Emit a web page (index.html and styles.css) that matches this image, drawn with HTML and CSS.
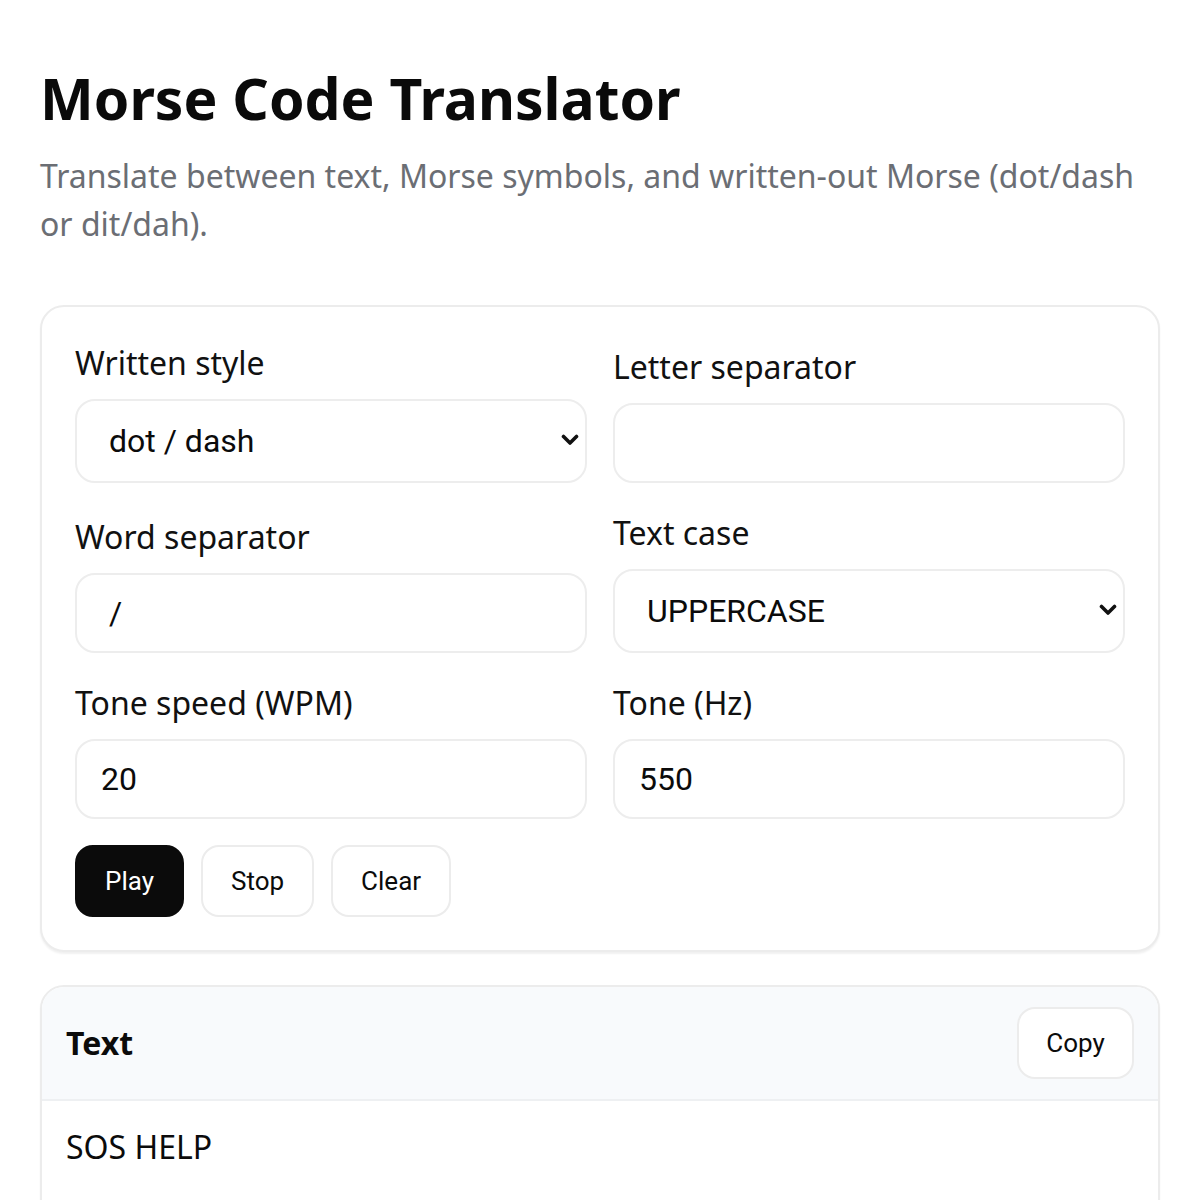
FILE: index.html
```html
<!DOCTYPE html>
<html lang="en">
<head>
<meta charset="utf-8">
<title>Morse Code Translator</title>
<link rel="stylesheet" href="styles.css">
</head>
<body>
<main class="page">
  <h1 class="title">Morse Code Translator</h1>
  <p class="subtitle">Translate between text, Morse symbols, and written-out Morse (dot/dash or dit/dah).</p>

  <section class="card settings">
    <div class="grid">
      <div class="field">
        <label class="label" for="style">Written style</label>
        <div class="select-wrap">
          <select id="style" class="control select">
            <option>dot / dash</option>
            <option>dit / dah</option>
          </select>
          <svg class="chevron" viewBox="0 0 18 12" width="18" height="12" aria-hidden="true"><path d="M2.5 2.5 L9 9 L15.5 2.5" fill="none" stroke="#111" stroke-width="3.6" stroke-linecap="round" stroke-linejoin="round"/></svg>
        </div>
      </div>
      <div class="field">
        <label class="label" for="letter">Letter separator</label>
        <input id="letter" class="control input" type="text" value=" ">
      </div>
      <div class="field">
        <label class="label" for="word">Word separator</label>
        <input id="word" class="control input" type="text" value=" / ">
      </div>
      <div class="field">
        <label class="label" for="case">Text case</label>
        <div class="select-wrap">
          <select id="case" class="control select">
            <option>UPPERCASE</option>
            <option>lowercase</option>
          </select>
          <svg class="chevron" viewBox="0 0 18 12" width="18" height="12" aria-hidden="true"><path d="M2.5 2.5 L9 9 L15.5 2.5" fill="none" stroke="#111" stroke-width="3.6" stroke-linecap="round" stroke-linejoin="round"/></svg>
        </div>
      </div>
      <div class="field">
        <label class="label" for="wpm">Tone speed (WPM)</label>
        <input id="wpm" class="control input num" type="text" value="20">
      </div>
      <div class="field">
        <label class="label" for="hz">Tone (Hz)</label>
        <input id="hz" class="control input num" type="text" value="550">
      </div>
    </div>
    <div class="actions">
      <button class="btn btn-primary" type="button">Play</button>
      <button class="btn" type="button">Stop</button>
      <button class="btn" type="button">Clear</button>
    </div>
  </section>

  <section class="card panel">
    <header class="panel-head">
      <h2 class="panel-title">Text</h2>
      <button class="btn btn-copy" type="button">Copy</button>
    </header>
    <div class="panel-body">SOS HELP</div>
  </section>
</main>
</body>
</html>
```

FILE: styles.css
```css
* { box-sizing: border-box; }

html, body {
  margin: 0;
  padding: 0;
  background: #ffffff;
}

body {
  font-family: "Noto Sans", "Open Sans", "DejaVu Sans", sans-serif;
  color: #0b0b0b;
}

.page {
  padding: 64px 40px 40px;
}

.title {
  margin: 0;
  font-size: 57px;
  line-height: 68px;
  font-weight: 700;
  color: #0a0a0a;
  letter-spacing: 0;
}

.subtitle {
  margin: 20px 0 0;
  font-size: 32px;
  line-height: 48px;
  color: #6b6e74;
}

.card {
  border: 2px solid #ececec;
  border-radius: 24px;
  background: #fff;
  box-shadow: 0 2px 2px rgba(0, 0, 0, 0.06);
}

.settings {
  margin-top: 57px;
  padding: 33px;
}

.grid {
  display: grid;
  grid-template-columns: 1fr 1fr;
  column-gap: 26px;
  row-gap: 27px;
  align-items: end;
}

.field {
  display: flex;
  flex-direction: column;
  gap: 14px;
}

.label {
  font-size: 32px;
  line-height: 45px;
  color: #111;
}

.control {
  width: 100%;
  border: 2px solid #ededed;
  border-radius: 20px;
  background: #fff;
  font-family: Roboto, "Liberation Sans", sans-serif;
  font-size: 32px;
  color: #0b0b0b;
  outline: none;
}

.input {
  height: 80px;
  padding: 0 24px;
}

.select-wrap {
  position: relative;
}

.select {
  appearance: none;
  -webkit-appearance: none;
  height: 84px;
  padding: 0 60px 0 32px;
}

.chevron {
  position: absolute;
  right: 8px;
  top: 50%;
  margin-top: -7px;
  pointer-events: none;
}

.actions {
  display: flex;
  gap: 17px;
  margin-top: 26px;
}

.btn {
  height: 72px;
  padding: 0 28px;
  border: 2px solid #ececec;
  border-radius: 18px;
  background: #fff;
  font-family: Roboto, "Liberation Sans", sans-serif;
  font-size: 26px;
  color: #0b0b0b;
}

.btn-primary {
  background: #0b0b0b;
  border-color: #0b0b0b;
  color: #fff;
}

.panel {
  margin-top: 33px;
  overflow: hidden;
}

.panel-head {
  display: flex;
  align-items: center;
  justify-content: space-between;
  padding: 20px 24px;
  background: #f8fafc;
  border-bottom: 2px solid #eef0f2;
}

.panel-title {
  margin: 0;
  font-size: 32px;
  font-weight: 700;
  line-height: 44px;
}

.btn-copy {
  width: 117px;
  padding: 0;
}

.panel-body {
  padding: 26px 24px;
  font-size: 32px;
  line-height: 40px;
  min-height: 200px;
}
```
